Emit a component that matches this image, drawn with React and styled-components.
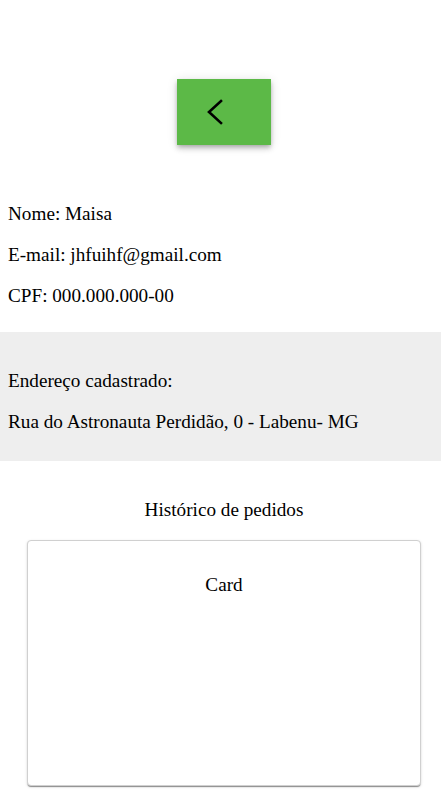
import React from "react";
import styled, { createGlobalStyle } from "styled-components";

const GlobalStyle = createGlobalStyle`
  body {
    margin: 0;
    background: #ffffff;
    font-family: "Liberation Serif", "Times New Roman", serif;
    color: #000000;
  }
`;

const Page = styled.div`
  display: flex;
  flex-direction: column;
  padding-top: 79px;
`;

const ButtonRow = styled.div`
  display: flex;
  justify-content: center;
  padding-left: 7px;
`;

const BackButton = styled.button`
  all: unset;
  width: 94px;
  height: 66px;
  background: #5cb947;
  display: flex;
  justify-content: center;
  align-items: center;
  cursor: pointer;
  box-shadow: 0 2px 4px -1px rgba(0, 0, 0, 0.2), 0 4px 5px 0 rgba(0, 0, 0, 0.14),
    0 1px 10px 0 rgba(0, 0, 0, 0.12);

  svg {
    margin-left: -16px;
  }
`;

const Section = styled.section`
  display: flex;
  flex-direction: column;
  gap: 19px;
  padding: ${(p) => p.$pad};
  background: ${(p) => (p.$grey ? "#eeeeee" : "transparent")};
`;

const Line = styled.p`
  margin: 0;
  font-size: 19.2px;
  line-height: 22px;
`;

const History = styled.div`
  display: flex;
  flex-direction: column;
  align-items: center;
  gap: 19px;
  padding: 38px 0 4px 7px;
`;

const Title = styled.h3`
  margin: 0;
  font-size: 19.2px;
  line-height: 22px;
  font-weight: normal;
`;

const Card = styled.div`
  box-sizing: border-box;
  width: 394px;
  height: 246px;
  border: 1px solid #d0d0d0;
  border-radius: 4px;
  background: #fff;
  padding-top: 33px;
  text-align: center;
  box-shadow: 0 2px 1px -1px rgba(0, 0, 0, 0.3), 0 1px 1px 0 rgba(0, 0, 0, 0.14),
    0 1px 3px 0 rgba(0, 0, 0, 0.12);
`;

function Chevron() {
  return (
    <svg width="18" height="26" viewBox="0 0 18 26">
      <polyline
        points="14,2 2,13 14,24"
        fill="none"
        stroke="#000"
        strokeWidth="2.6"
        strokeLinecap="square"
      />
    </svg>
  );
}

export default function App() {
  return (
    <Page>
      <GlobalStyle />
      <ButtonRow>
        <BackButton aria-label="voltar">
          <Chevron />
        </BackButton>
      </ButtonRow>
      <Section $pad="58px 8px 25px">
        <Line>Nome: Maisa</Line>
        <Line>E-mail: jhfuihf@gmail.com</Line>
        <Line>CPF: 000.000.000-00</Line>
      </Section>
      <Section $grey $pad="38px 8px 28px">
        <Line>Endereço cadastrado:</Line>
        <Line>Rua do Astronauta Perdidão, 0 - Labenu- MG</Line>
      </Section>
      <History>
        <Title>Histórico de pedidos</Title>
        <Card>
          <Line>Card</Line>
        </Card>
      </History>
    </Page>
  );
}
